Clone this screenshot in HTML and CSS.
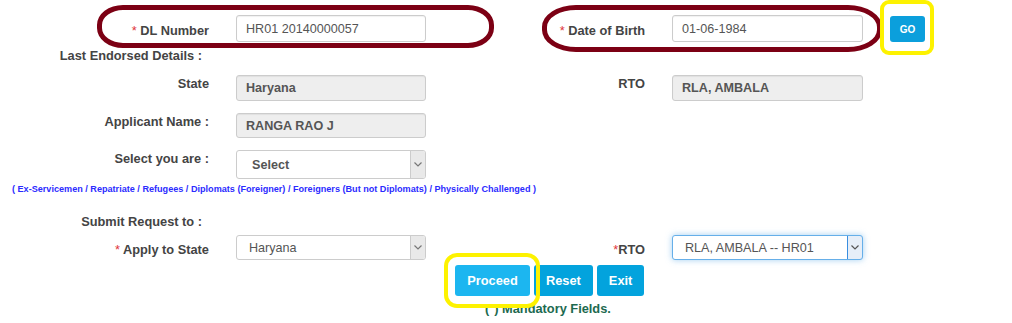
FILE: index.html
```html
<!DOCTYPE html>
<html>
<head>
<meta charset="utf-8">
<link rel="stylesheet" href="styles.css">
</head>
<body>
<div class="page">
  <div class="row row-top">
    <label class="lbl mid"><span class="req">*</span> DL Number</label>
    <div class="field">HR01 20140000057</div>
    <label class="lbl mid"><span class="req">*</span> Date of Birth</label>
    <div class="field">01-06-1984</div>
    <button class="btn go">GO</button>
  </div>

  <div class="section sec-endorsed">Last Endorsed Details :</div>

  <div class="row row-state">
    <label class="lbl top">State</label>
    <div class="field ro">Haryana</div>
    <label class="lbl top">RTO</label>
    <div class="field ro">RLA, AMBALA</div>
  </div>

  <div class="row row-name">
    <label class="lbl top">Applicant Name :</label>
    <div class="field ro">RANGA RAO J</div>
  </div>

  <div class="row row-select">
    <label class="lbl top">Select you are :</label>
    <div class="select bold">
      <span class="sel-text">Select</span>
      <span class="arrow"><svg width="8" height="5" viewBox="0 0 8 5"><polyline points="0.5,0.5 4,4 7.5,0.5" fill="none" stroke="#777" stroke-width="1.2"/></svg></span>
    </div>
  </div>

  <div class="note">( Ex-Servicemen / Repatriate / Refugees / Diplomats (Foreigner) / Foreigners (But not Diplomats) / Physically Challenged )</div>

  <div class="section sec-submit">Submit Request to :</div>

  <div class="row row-apply">
    <label class="lbl mid"><span class="req">*</span> Apply to State</label>
    <div class="select">
      <span class="sel-text">Haryana</span>
      <span class="arrow"><svg width="8" height="5" viewBox="0 0 8 5"><polyline points="0.5,0.5 4,4 7.5,0.5" fill="none" stroke="#777" stroke-width="1.2"/></svg></span>
    </div>
    <label class="lbl mid"><span class="req">*</span>RTO</label>
    <div class="select focus">
      <span class="sel-text rto">RLA, AMBALA -- HR01</span>
      <span class="arrow"><svg width="8" height="5" viewBox="0 0 8 5"><polyline points="0.5,0.5 4,4 7.5,0.5" fill="none" stroke="#555" stroke-width="1.2"/></svg></span>
    </div>
  </div>

  <div class="actions">
    <button class="btn act proceed">Proceed</button>
    <button class="btn act">Reset</button>
    <button class="btn act">Exit</button>
  </div>
  <div class="mandatory">(<span class="req-hidden">*</span>) Mandatory Fields.</div>

  <div class="mark maroon m1"></div>
  <div class="mark maroon m2"></div>
  <div class="mark yellow y1"></div>
  <div class="mark yellow y2"></div>
</div>
</body>
</html>
```

FILE: styles.css
```css
html, body {
  margin: 0;
  padding: 0;
  background: #fff;
  overflow: hidden;
}
body {
  font-family: "Liberation Sans", Arial, sans-serif;
  color: #444;
}
.page {
  position: relative;
  width: 1012px;
  height: 323px;
  padding-top: 15px;
  box-sizing: border-box;
}
.row {
  display: grid;
  grid-template-columns: 209px 190px 192px 191px 35px;
  column-gap: 27px;
}
.lbl {
  font-weight: bold;
  font-size: 12.8px;
  line-height: 15px;
  text-align: right;
  color: #444;
  white-space: nowrap;
}
.lbl.mid { align-self: center; padding-top: 3px; }
.lbl.top { align-self: start; padding-top: 1px; }
.req { color: #e0353a; font-weight: normal; }
.req-hidden { color: transparent; }

.field {
  box-sizing: border-box;
  border: 1px solid #ccc;
  border-radius: 3px;
  background: #fff;
  font-size: 12.6px;
  color: #555;
  padding-left: 9px;
  display: flex;
  align-items: center;
  box-shadow: inset 0 1px 1px rgba(0,0,0,0.06);
  white-space: nowrap;
}
.field.ro {
  background: #eee;
  font-weight: bold;
}
.row-top { height: 27px; }
.row-top .field { height: 27px; }
.go {
  height: 26px;
  margin-top: 1px;
  background: #0b9fdc;
  font-size: 10px;
  padding: 0;
}
.btn {
  border: none;
  border-radius: 3px;
  color: #fff;
  font-family: "Liberation Sans", Arial, sans-serif;
  font-weight: bold;
}

.section {
  width: 202px;
  text-align: right;
  font-weight: bold;
  font-size: 12.8px;
  line-height: 15px;
  color: #444;
  white-space: nowrap;
}
.sec-endorsed { margin-top: 6px; }
.row-state { margin-top: 12px; height: 26px; }
.row-name { margin-top: 12px; height: 25px; }
.row-select { margin-top: 12px; height: 29px; }

.select {
  box-sizing: border-box;
  border: 1px solid #ccc;
  border-radius: 3px;
  background: #fff;
  display: flex;
  align-items: stretch;
  font-size: 12.6px;
  color: #555;
  overflow: hidden;
}
.select.bold { font-weight: bold; }
.sel-text {
  flex: 1;
  display: flex;
  align-items: center;
  padding-left: 15px;
  white-space: nowrap;
}
.row-apply .sel-text { padding-left: 12px; }
.arrow {
  width: 14px;
  border-left: 1px solid #ccc;
  background: #e9e9e9;
  display: flex;
  align-items: center;
  justify-content: center;
}
.select.focus {
  border-color: #66afe9;
  box-shadow: 0 0 6px rgba(102,175,233,0.6);
}
.select.focus .arrow {
  border: 1px solid #3a8ee0;
  border-radius: 0 3px 3px 0;
  background: #e6eef8;
  margin: -1px -1px -1px 0;
}

.note {
  margin-top: 5px;
  padding-left: 12px;
  font-size: 9.1px;
  line-height: 11px;
  font-weight: bold;
  color: #2b2bff;
  white-space: nowrap;
}
.sec-submit { margin-top: 19px; }
.row-apply { margin-top: 6px; height: 25px; }

.actions {
  margin-top: 5px;
  padding-left: 455px;
  display: flex;
  gap: 4px;
}
.act {
  height: 31px;
  padding: 0 12px;
  font-size: 12.8px;
  background: #03a3dd;
}
.act.proceed {
  width: 75px;
  background: #1cb6f0;
}
.mandatory {
  margin-top: 5px;
  padding-left: 485px;
  font-size: 12.8px;
  line-height: 15px;
  font-weight: bold;
  color: #1d6a4f;
  white-space: nowrap;
}

.mark {
  position: absolute;
  box-sizing: border-box;
  pointer-events: none;
}
.maroon { border: 5px solid #7c0014; }
.m1 {
  left: 97px; top: 5px; width: 397px; height: 43px;
  border-radius: 26px / 20px;
}
.m2 {
  left: 542px; top: 5px; width: 340px; height: 47px;
  border-radius: 34px / 22px;
}
.yellow { border: 4px solid #fdf200; }
.y1 {
  left: 880px; top: 0px; width: 54px; height: 55px;
  border-radius: 9px;
}
.y2 {
  left: 444px; top: 253px; width: 96px; height: 55px;
  border-radius: 13px;
}
```
